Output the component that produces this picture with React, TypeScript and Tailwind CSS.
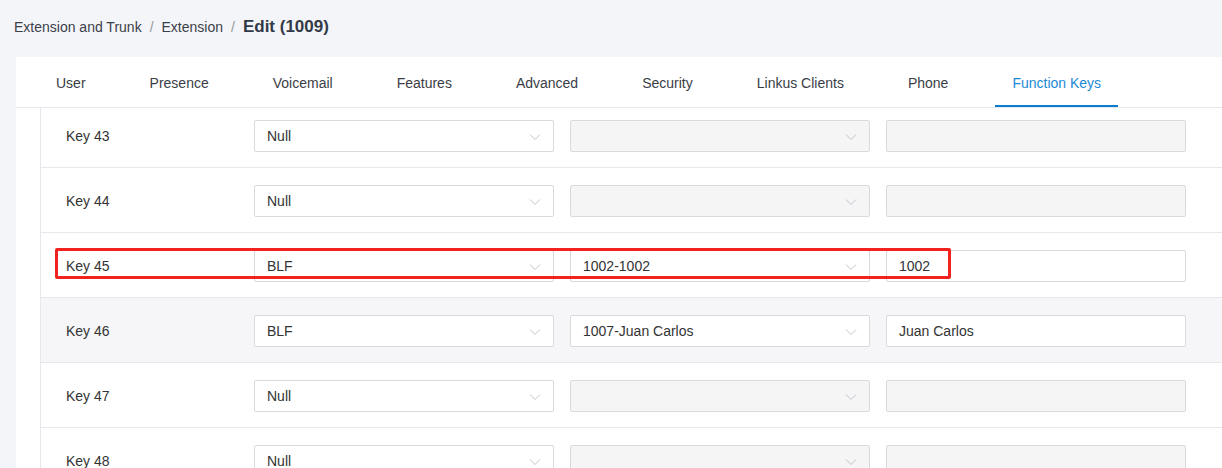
import React from "react";

const Chev = () => (
  <svg width="12" height="8" viewBox="0 0 12 8" className="absolute right-[12px] top-[12px]">
    <path d="M1 1.5 L6 6.5 L11 1.5" fill="none" stroke="#c0c4cc" strokeWidth="1" />
  </svg>
);

const Sel = ({ v, dis }: { v?: string; dis?: boolean }) => (
  <div className={`relative w-[300px] h-[32px] border border-[#d9d9de] rounded-[2px] pl-[12px] leading-[30px] text-[14px] text-[#333] ${dis ? "bg-[#f5f5f6]" : "bg-white"}`}>
    {v}
    <Chev />
  </div>
);

const Inp = ({ v, dis }: { v?: string; dis?: boolean }) => (
  <div className={`w-[300px] h-[32px] border border-[#d9d9de] rounded-[2px] pl-[12px] leading-[30px] text-[14px] text-[#333] ${dis ? "bg-[#f5f5f6]" : "bg-white"}`}>{v}</div>
);

const rows = [
  { k: "Key 43", a: "Null", b: "", c: "", dis: true, h: "h-[60px]" },
  { k: "Key 44", a: "Null", b: "", c: "", dis: true, h: "h-[65px]" },
  { k: "Key 45", a: "BLF", b: "1002-1002", c: "1002", dis: false, h: "h-[65px]" },
  { k: "Key 46", a: "BLF", b: "1007-Juan Carlos", c: "Juan Carlos", dis: false, h: "h-[65px]", bg: true },
  { k: "Key 47", a: "Null", b: "", c: "", dis: true, h: "h-[65px]" },
  { k: "Key 48", a: "Null", b: "", c: "", dis: true, h: "h-[65px]" },
];

const tabs = ["User", "Presence", "Voicemail", "Features", "Advanced", "Security", "Linkus Clients", "Phone", "Function Keys"];

export default function App() {
  return (
    <div className="w-[1222px] h-[468px] overflow-hidden bg-[#f4f5f8] relative" style={{ fontFamily: "Arial, 'Liberation Sans', sans-serif" }}>
      <div className="h-[57px] pl-[14px] pt-[14px] flex items-baseline text-[14px] text-[#3b3f4a]">
        <span>Extension and Trunk</span>
        <span className="mx-[8px] text-[#999]">/</span>
        <span>Extension</span>
        <span className="mx-[8px] text-[#999]">/</span>
        <span className="text-[17px] font-bold text-[#333a47]">Edit (1009)</span>
      </div>
      <div className="ml-[16px] bg-white h-[500px]">
        <div className="flex pl-[23px] gap-[30px] h-[51px] border-b border-[#e6e8ee]">
          {tabs.map((t, i) => (
            <div key={t} className={`px-[17px] pt-[16px] text-[14px] ${i === 8 ? "text-[#1d8ad6] border-b-2 border-[#0a7dcf]" : "text-[#3a3d45]"}`}>{t}</div>
          ))}
        </div>
        <div className="ml-[24px] border-l border-[#e6e8ee]">
          {rows.map((r) => (
            <div key={r.k} className={`${r.h} flex items-end pb-[15px] border-b border-[#e6e8ee] ${r.bg ? "bg-[#f6f6f9]" : ""}`}>
              <div className="w-[213px] pl-[25px] leading-[32px] text-[14px] text-[#333]">{r.k}</div>
              <div className="flex gap-[16px]">
                <Sel v={r.a} />
                <Sel v={r.b} dis={r.dis} />
                <Inp v={r.c} dis={r.dis} />
              </div>
            </div>
          ))}
        </div>
      </div>
      <div className="absolute left-[55px] top-[248px] w-[896px] h-[31px] border-[3px] border-[#f2231f] rounded-[2px]" />
    </div>
  );
}
